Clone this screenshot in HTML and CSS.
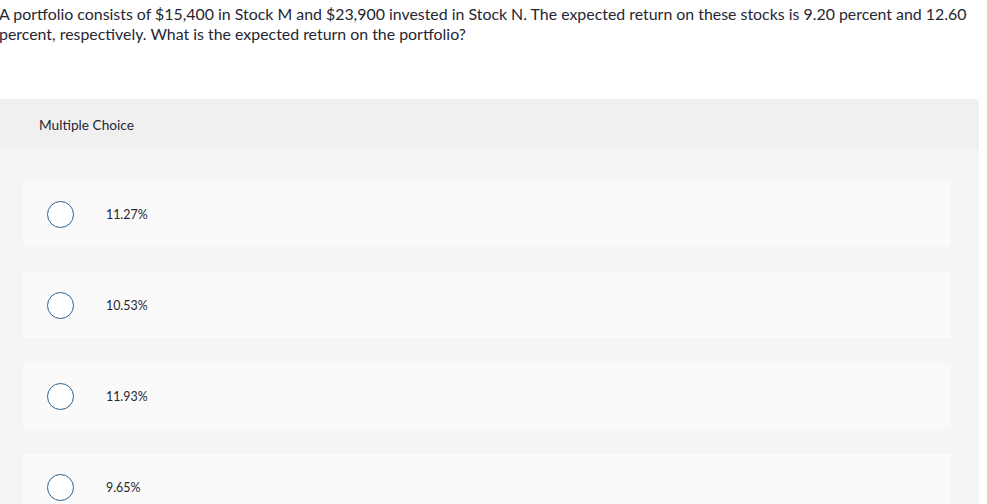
FILE: index.html
```html
<!DOCTYPE html>
<html>
<head>
<meta charset="utf-8">
<link rel="stylesheet" href="styles.css">
</head>
<body>
<p class="question">A portfolio consists of $15,400 in Stock M and $23,900 invested in Stock N. The expected return on these stocks is 9.20 percent and 12.60 percent, respectively. What is the expected return on the portfolio?</p>
<section class="mc">
  <div class="mc-head">Multiple Choice</div>
  <div class="mc-body">
    <div class="opt"><span class="radio"></span><span class="label">11.27%</span></div>
    <div class="opt"><span class="radio"></span><span class="label">10.53%</span></div>
    <div class="opt"><span class="radio"></span><span class="label">11.93%</span></div>
    <div class="opt"><span class="radio"></span><span class="label">9.65%</span></div>
  </div>
</section>
</body>
</html>
```
FILE: styles.css
```css
html, body {
  margin: 0;
  padding: 0;
  background: #ffffff;
}
body {
  font-family: "Lato", "Open Sans", sans-serif;
  color: #262633;
  height: 504px;
  overflow: hidden;
}
.question {
  margin: 4px 0 0 -1px;
  width: 978px;
  font-size: 15.9px;
  line-height: 20px;
}
.mc {
  margin-top: 55px;
  width: 979px;
}
.mc-head {
  height: 50px;
  background: #f0f0f0;
  border-top-right-radius: 3px;
  display: flex;
  align-items: center;
  padding-left: 39px;
  font-size: 13.7px;
}
.mc-body {
  background: #f5f5f5;
  padding: 32px 28px 20px 23px;
  display: flex;
  flex-direction: column;
  gap: 25px;
}
.opt {
  height: 66px;
  background: #fafafa;
  border-radius: 3px;
  display: flex;
  align-items: center;
}
.radio {
  width: 25px;
  height: 25px;
  border: 1.5px solid #2e5f8c;
  border-radius: 50%;
  background: #fff;
  margin-left: 24px;
  flex: none;
}
.label {
  margin-left: 32px;
  font-size: 12.4px;
}
```
